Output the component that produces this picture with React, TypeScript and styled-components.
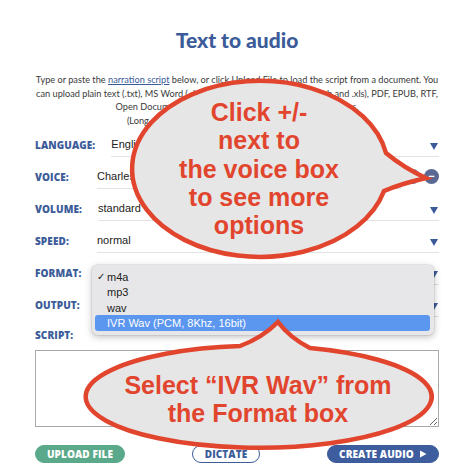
import React from 'react';
import styled, { createGlobalStyle } from 'styled-components';

const GlobalStyle = createGlobalStyle`
  html, body {
    margin: 0;
    padding: 0;
    background: #ffffff;
  }
  body {
    width: 474px;
    height: 474px;
    overflow: hidden;
    font-family: "Liberation Sans", Arial, sans-serif;
  }
`;

const BLUE = '#3c5c99';
const RED = '#e2452d';

const Page = styled.div`
  position: relative;
  width: 474px;
  height: 474px;
  overflow: hidden;
  background: #fff;
`;

const Container = styled.div`
  padding: 27px 35px 0;
  box-sizing: border-box;
`;

const Title = styled.h1`
  margin: 0;
  text-align: center;
  font: 900 21px/26px Lato, "Open Sans", sans-serif;
  color: ${BLUE};
`;

const Intro = styled.p`
  margin: 20px -20px 0;
  text-align: center;
  font: 400 9.2px/13.7px Lato, sans-serif;
  color: #3a3a3a;
  white-space: nowrap;

  a {
    color: ${BLUE};
    text-decoration: underline;
  }
`;

const Form = styled.div`
  margin-top: 5px;
  display: flex;
  flex-direction: column;
  gap: 8px;
`;

const Row = styled.div`
  position: relative;
  display: flex;
  align-items: stretch;
  height: 24px;
`;

const Label = styled.div`
  flex: 0 0 auto;
  min-width: 62px;
  padding-right: 16px;
  box-sizing: border-box;
  display: flex;
  align-items: center;
  font: 800 10px "Open Sans", sans-serif;
  color: ${BLUE};
  letter-spacing: 0.1px;
`;

const Field = styled.div`
  flex: 1;
  display: flex;
  align-items: center;
  justify-content: space-between;
  border-bottom: 1px solid #e2e2e2;
  box-sizing: border-box;
  font: 400 11px "Liberation Sans", Arial, sans-serif;
  color: #222;
`;

const Caret = styled.span`
  width: 0;
  height: 0;
  margin-top: 4px;
  margin-right: 1px;
  margin-left: auto;
  border-left: 4px solid transparent;
  border-right: 4px solid transparent;
  border-top: 7px solid ${BLUE};
`;

const RoundButton = styled.span`
  flex: 0 0 auto;
  align-self: center;
  width: 15px;
  height: 15px;
  margin-left: 4px;
  border-radius: 50%;
  background: #5a6894;
  color: #fff;
  display: flex;
  align-items: center;
  justify-content: center;
  font: 700 11px/1 "Liberation Sans", Arial, sans-serif;
`;

const Menu = styled.div`
  position: absolute;
  left: 57px;
  top: 4px;
  width: 342px;
  padding: 4px 4px 4px 3px;
  box-sizing: border-box;
  background: #e7e7e9;
  border-radius: 5px;
  box-shadow: 0 2px 7px rgba(0, 0, 0, 0.25), 0 0 0 0.5px rgba(0, 0, 0, 0.12);
  z-index: 2;
`;

const MenuItem = styled.div<{ $active?: boolean }>`
  position: relative;
  height: 15.5px;
  padding-left: 12px;
  display: flex;
  align-items: center;
  border-radius: 3px;
  font: 400 11px "Liberation Sans", Arial, sans-serif;
  color: ${({ $active }) => ($active ? '#fff' : '#222')};
  background: ${({ $active }) => ($active ? '#5b96ef' : 'transparent')};
`;

const Check = styled.span`
  position: absolute;
  left: 2px;
  font-size: 10px;
`;

const ScriptLabel = styled(Label)`
  margin-top: 11px;
  height: 14px;
`;

const ScriptBox = styled.textarea`
  display: block;
  margin-top: 8px;
  width: 100%;
  height: 77px;
  box-sizing: border-box;
  border: 1px solid #a9a9a9;
  resize: vertical;
  background: #fff;
`;

const Actions = styled.div`
  margin-top: 18px;
  display: flex;
  justify-content: space-between;
`;

const ActionButton = styled.button<{ $variant: 'green' | 'outline' | 'blue'; $w: number }>`
  width: ${({ $w }) => $w}px;
  height: 18px;
  padding: 0;
  border-radius: 9px;
  box-sizing: border-box;
  font: 800 10px "Open Sans", sans-serif;
  letter-spacing: 0.1px;
  display: flex;
  align-items: center;
  justify-content: center;
  gap: 5px;
  border: 1px solid ${({ $variant }) => ($variant === 'green' ? '#5ba98b' : BLUE)};
  background: ${({ $variant }) =>
    $variant === 'green' ? '#5ba98b' : $variant === 'blue' ? '#3d5d9e' : '#fff'};
  color: ${({ $variant }) => ($variant === 'outline' ? BLUE : '#fff')};
`;

const Overlay = styled.div`
  position: absolute;
  inset: 0;
  pointer-events: none;
  z-index: 5;
`;

const Bubbles = styled.svg`
  position: absolute;
  left: 0;
  top: 0;
`;

const BubbleText = styled.div<{ $left: number; $top: number; $width: number }>`
  position: absolute;
  left: ${({ $left }) => $left}px;
  top: ${({ $top }) => $top}px;
  width: ${({ $width }) => $width}px;
  text-align: center;
  font: 700 25px/28.3px "Liberation Sans", Arial, sans-serif;
  color: ${RED};
  white-space: nowrap;
`;

const App: React.FC = () => {
  return (
    <Page>
      <GlobalStyle />
      <Container>
        <Title>Text to audio</Title>
        <Intro>
          Type or paste the <a>narration script</a> below, or click Upload File to load the script from a document. You
          <br />
          can upload plain text (.txt), MS Word (.doc and .docx), MS Excel (.xlsx, xlsb and .xls), PDF, EPUB, RTF,
          <br />
          Open Document (.odt and .ods), HTML and Powerpoint files.
          <br />
          (Long documents may take a few minutes to load fully.)
        </Intro>

        <Form>
          <Row>
            <Label>LANGUAGE:</Label>
            <Field>
              English (US)
              <Caret />
            </Field>
          </Row>
          <Row>
            <Label>VOICE:</Label>
            <Field>Charles</Field>
            <RoundButton>+</RoundButton>
            <RoundButton>−</RoundButton>
          </Row>
          <Row>
            <Label>VOLUME:</Label>
            <Field>
              standard
              <Caret />
            </Field>
          </Row>
          <Row>
            <Label>SPEED:</Label>
            <Field>
              normal
              <Caret />
            </Field>
          </Row>
          <Row>
            <Label>FORMAT:</Label>
            <Field>
              <Caret />
            </Field>
            <Menu>
              <MenuItem>
                <Check>✓</Check>m4a
              </MenuItem>
              <MenuItem>mp3</MenuItem>
              <MenuItem>wav</MenuItem>
              <MenuItem $active>IVR Wav (PCM, 8Khz, 16bit)</MenuItem>
            </Menu>
          </Row>
          <Row>
            <Label>OUTPUT:</Label>
            <Field>
              <Caret />
            </Field>
          </Row>
        </Form>

        <ScriptLabel>SCRIPT:</ScriptLabel>
        <ScriptBox />

        <Actions>
          <ActionButton $variant="green" $w={90}>UPLOAD FILE</ActionButton>
          <ActionButton $variant="outline" $w={68}>DICTATE</ActionButton>
          <ActionButton $variant="blue" $w={112}>
            CREATE AUDIO
            <svg width="8" height="8" viewBox="0 0 8 8">
              <path d="M1 0.5 L7.5 4 L1 7.5 Z" fill="#fff" />
            </svg>
          </ActionButton>
        </Actions>
      </Container>

      <Overlay>
        <Bubbles width="474" height="474" viewBox="0 0 474 474">
          <path
            d="M386 153 A128 88 0 1 0 384 191 Q400 184 426 178 Q404 168 386 153 Z"
            fill="#e6e6e7"
            stroke={RED}
            strokeWidth="4.5"
            strokeLinejoin="miter"
          />
          <path
            d="M310 348 A173 51 0 1 1 240 346 Q262 338 278 322 Q290 338 310 348 Z"
            fill="#e6e6e7"
            stroke={RED}
            strokeWidth="4.5"
            strokeLinejoin="miter"
          />
        </Bubbles>
        <BubbleText $left={129} $top={98} $width={260}>
          Click +/-
          <br />
          next to
          <br />
          the voice box
          <br />
          to see more
          <br />
          options
        </BubbleText>
        <BubbleText $left={108} $top={371} $width={300}>
          Select “IVR Wav” from
          <br />
          the Format box
        </BubbleText>
      </Overlay>
    </Page>
  );
};

export default App;
